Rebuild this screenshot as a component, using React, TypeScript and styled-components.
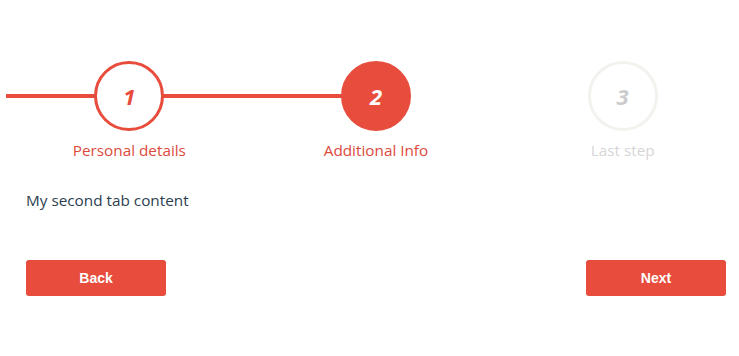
import React from "react";
import styled, { createGlobalStyle } from "styled-components";

const Global = createGlobalStyle`
  html, body { margin: 0; padding: 0; background: #fff; overflow: hidden; }
  body { font-family: "Open Sans", "Noto Sans", sans-serif; }
`;

const RED = "#e74c3c";

const Wizard = styled.div`
  margin-left: 6px;
  width: 740px;
  padding-top: 61px;
`;

const Nav = styled.ul`
  position: relative;
  list-style: none;
  margin: 0;
  padding: 0;
  display: grid;
  grid-template-columns: repeat(3, 1fr);
`;

const Progress = styled.div<{ $w: string }>`
  position: absolute;
  left: 0;
  top: 33px;
  height: 4px;
  width: ${(p) => p.$w};
  background: ${RED};
  z-index: 0;
`;

type State = "done" | "active" | "todo";

const Step = styled.li`
  display: flex;
  flex-direction: column;
  align-items: center;
  position: relative;
  z-index: 1;
`;

const Circle = styled.div<{ $s: State }>`
  box-sizing: border-box;
  width: 70px;
  height: 70px;
  border-radius: 50%;
  border: 3px solid ${(p) => (p.$s === "todo" ? "#f3f2ee" : RED)};
  background: ${(p) => (p.$s === "active" ? RED : "#fff")};
  display: flex;
  align-items: center;
  justify-content: center;
  font-family: "Open Sans", "Noto Sans", sans-serif;
  font-weight: 700;
  font-style: italic;
  font-size: 22px;
  color: ${(p) => (p.$s === "active" ? "#fff" : p.$s === "done" ? RED : "#cccccc")};
`;

const Label = styled.span<{ $s: State }>`
  margin-top: 9px;
  font-size: 15.3px;
  line-height: 20px;
  color: ${(p) => (p.$s === "todo" ? "#d6d6d6" : "#dc4a3c")};
`;

const Body = styled.div`
  padding: 30px 20px 0;
`;

const Content = styled.p`
  margin: 0;
  font-size: 15.3px;
  line-height: 20px;
  color: #2c3e50;
`;

const Footer = styled.div`
  display: flex;
  justify-content: space-between;
  margin-top: 50px;
`;

const Button = styled.button`
  width: 140px;
  height: 36px;
  border: none;
  border-radius: 3px;
  background: ${RED};
  color: #fff;
  font-family: "Liberation Sans", Arial, sans-serif;
  font-weight: 700;
  font-size: 14px;
  cursor: pointer;
`;

const steps: { n: number; label: string; s: State }[] = [
  { n: 1, label: "Personal details", s: "done" },
  { n: 2, label: "Additional Info", s: "active" },
  { n: 3, label: "Last step", s: "todo" },
];

export default function App() {
  return (
    <>
      <Global />
      <Wizard>
        <Nav>
          <Progress $w="50%" />
          {steps.map((st) => (
            <Step key={st.n}>
              <Circle $s={st.s}>{st.n}</Circle>
              <Label $s={st.s}>{st.label}</Label>
            </Step>
          ))}
        </Nav>
        <Body>
          <Content>My second tab content</Content>
          <Footer>
            <Button>Back</Button>
            <Button>Next</Button>
          </Footer>
        </Body>
      </Wizard>
    </>
  );
}
